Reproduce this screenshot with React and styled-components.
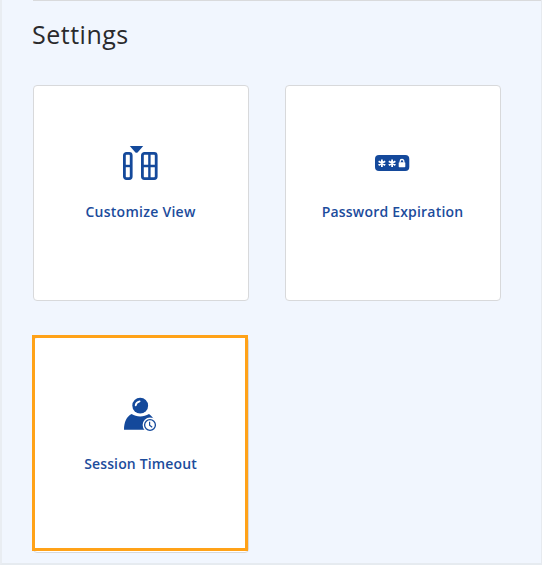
import React from "react";
import styled, { createGlobalStyle } from "styled-components";

const GlobalStyle = createGlobalStyle`
*{
box-sizing:border-box;
}
body{
margin:0;
}
`;

const Page = styled.main`
display:flex;
flex-direction:column;
height:565px;
background-color:#f1f6fe;
border-left:2px solid #e9edf2;
border-right:1px solid #e6eaef;
border-bottom:2px solid #e6ebf0;
`;

const TopLine = styled.div`
height:1px;
flex:none;
margin-left:31px;
background-color:#d9dadc;
`;

const Title = styled.h1`
margin:15px 0 0 30px;
height:36px;
line-height:36px;
font-family:"Open Sans","Noto Sans",sans-serif;
font-size:25px;
font-weight:400;
letter-spacing:0.5px;
color:#2a2a2c;
`;

const Grid = styled.div`
display:grid;
grid-template-columns:216px 216px;
grid-auto-rows:216px;
gap:36px;
margin:33px 0 0 31px;
`;

const Card = styled.div`
position:relative;
display:flex;
flex-direction:column;
align-items:center;
padding-top:59px;
background-color:#ffffff;
border:1px solid #d8d9db;
border-radius:4px;
cursor:pointer;
`;

// orange frame lying over the selected card
const Highlight = styled.span`
position:absolute;
top:-3px;
left:-2px;
width:216px;
height:216px;
border:3px solid #ffa218;
pointer-events:none;
`;

const Icon = styled.svg`
display:block;
width:36px;
height:36px;
color:#14499b;
`;

const Label = styled.div`
margin-top:21px;
padding-right:1px;
line-height:20px;
font-family:"Open Sans","Noto Sans",sans-serif;
font-size:14px;
font-weight:600;
letter-spacing:${(props) => props.$spacing};
white-space:nowrap;
color:#1c4c9c;
`;

const CustomizeIcon = () => (
  <Icon viewBox="0 0 36 36" fill="none" stroke="currentColor">
    <path d="M6.8 1h13.4l-5.4 6.2q-1.3 1.2-2.6 0z" fill="currentColor" stroke="none" />
    <rect x="1.4" y="8.4" width="6.8" height="25.2" rx="2" strokeWidth="2.8" />
    <path d="M1 21h7.5" strokeWidth="2.4" />
    <rect x="19.4" y="8.4" width="13.8" height="25.2" rx="2" strokeWidth="2.8" />
    <path d="M26.4 8v26M19 21h15" strokeWidth="2.4" />
  </Icon>
);

const PasswordIcon = () => (
  <Icon viewBox="0 0 36 36" fill="none">
    <rect x="0" y="10" width="34.3" height="16" rx="4" fill="currentColor" />
    <path
      d="M6.9 14.4v7.6M3.6 16.3l6.6 3.8M10.2 16.3l-6.6 3.8M17.1 14.4v7.6M13.8 16.3l6.6 3.8M20.4 16.3l-6.6 3.8"
      stroke="#fff"
      strokeWidth="1.8"
    />
    <rect x="23.7" y="17.3" width="6.6" height="5" rx="0.7" fill="#fff" />
    <path d="M25.2 17.5v-1.2a1.8 1.8 0 0 1 3.6 0v1.2" stroke="#fff" strokeWidth="1.3" />
  </Icon>
);

const SessionIcon = () => (
  <Icon viewBox="0 0 36 36" fill="none">
    <path d="M1 32.7c0-7.5 2.6-13.2 7.6-15.7 4.9 3.2 12.2 3.2 17.4 0 2.6 1.7 4.3 4.1 5.3 7.2v8.5z" fill="currentColor" />
    <circle cx="17.2" cy="8.7" r="7.9" fill="currentColor" />
    <path d="M12.7 8.4c.2-2.2 1.5-3.6 3.9-4.1" stroke="#fff" strokeWidth="1.8" strokeLinecap="round" />
    <circle cx="27" cy="28" r="7.4" fill="#fff" />
    <circle cx="27" cy="28" r="5.4" stroke="currentColor" strokeWidth="1.3" />
    <path d="M26.6 24.8v3.5l2.6 1.9" stroke="currentColor" strokeWidth="1.2" />
  </Icon>
);

const cards = [
  { name: "Customize View", icon: CustomizeIcon, spacing: "0.27px" },
  { name: "Password Expiration", icon: PasswordIcon, spacing: "0.2px" },
  { name: "Session Timeout", icon: SessionIcon, spacing: "0.14px", selected: true },
];

const App = () => {
  return (
    <>
      <GlobalStyle />
      <Page>
        <TopLine />
        <Title>Settings</Title>
        <Grid>
          {cards.map(({ name, icon: CardIcon, spacing, selected }) => (
            <Card key={name}>
              <CardIcon />
              <Label $spacing={spacing}>{name}</Label>
              {selected && <Highlight />}
            </Card>
          ))}
        </Grid>
      </Page>
    </>
  );
};

export default App;
